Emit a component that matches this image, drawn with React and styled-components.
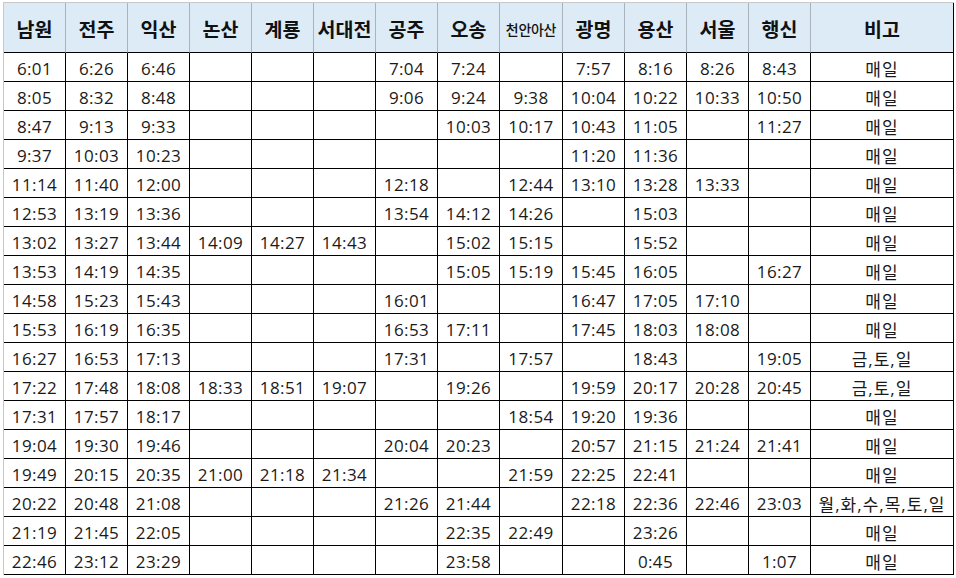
import styled, { createGlobalStyle } from 'styled-components';

// 기본 스타일
const GlobalStyle = createGlobalStyle`
  html, body {
    margin: 0;
    padding: 0;
    background: #ffffff;
  }
  body {
    font-family: "Noto Sans CJK KR", "Noto Sans", sans-serif;
    color: #111;
  }
`;

const COLUMNS = '62px 62px 62px 62px 62px 62px 62px 62px 63px 62px 62px 62px 62px 143px';

const Sheet = styled.div`
  padding: 2px 0 0 3px;
  width: 956px;
  height: 578px;
  box-sizing: border-box;
  overflow: hidden;
`;

const Grid = styled.div`
  display: grid;
  grid-template-columns: ${COLUMNS};
  grid-auto-rows: 29px;
  grid-template-rows: 50px;
  border-left: 1px solid #c8c8c8;
  border-top: 1px solid #c8c8c8;
  width: max-content;
`;

const HeadCell = styled.div`
  box-sizing: border-box;
  background: #ddebf7;
  border-right: 1px solid ${({ last }) => (last ? '#000' : '#a9b3bd')};
  border-bottom: 1px solid #000;
  display: flex;
  align-items: center;
  justify-content: center;
  font-size: ${({ small }) => (small ? '14px' : '19.5px')};
  font-weight: ${({ small }) => (small ? 500 : 700)};
  color: #111;
  padding-top: 2px;
  white-space: nowrap;
  letter-spacing: ${({ small }) => (small ? '-0.3px' : '0')};
`;

const Cell = styled.div`
  box-sizing: border-box;
  border-right: 1px solid #000;
  border-bottom: 1px solid #000;
  display: flex;
  align-items: center;
  justify-content: center;
  font-family: "Open Sans", "Noto Sans CJK KR", sans-serif;
  font-size: 17px;
  color: #1a1a1a;
  padding-top: 2px;
  white-space: nowrap;
  letter-spacing: ${({ note }) => (note ? '1px' : '0.4px')};
`;

const headers = ['남원', '전주', '익산', '논산', '계룡', '서대전', '공주', '오송', '천안아산', '광명', '용산', '서울', '행신', '비고'];

const rows = [
  ['6:01', '6:26', '6:46', '', '', '', '7:04', '7:24', '', '7:57', '8:16', '8:26', '8:43', '매일'],
  ['8:05', '8:32', '8:48', '', '', '', '9:06', '9:24', '9:38', '10:04', '10:22', '10:33', '10:50', '매일'],
  ['8:47', '9:13', '9:33', '', '', '', '', '10:03', '10:17', '10:43', '11:05', '', '11:27', '매일'],
  ['9:37', '10:03', '10:23', '', '', '', '', '', '', '11:20', '11:36', '', '', '매일'],
  ['11:14', '11:40', '12:00', '', '', '', '12:18', '', '12:44', '13:10', '13:28', '13:33', '', '매일'],
  ['12:53', '13:19', '13:36', '', '', '', '13:54', '14:12', '14:26', '', '15:03', '', '', '매일'],
  ['13:02', '13:27', '13:44', '14:09', '14:27', '14:43', '', '15:02', '15:15', '', '15:52', '', '', '매일'],
  ['13:53', '14:19', '14:35', '', '', '', '', '15:05', '15:19', '15:45', '16:05', '', '16:27', '매일'],
  ['14:58', '15:23', '15:43', '', '', '', '16:01', '', '', '16:47', '17:05', '17:10', '', '매일'],
  ['15:53', '16:19', '16:35', '', '', '', '16:53', '17:11', '', '17:45', '18:03', '18:08', '', '매일'],
  ['16:27', '16:53', '17:13', '', '', '', '17:31', '', '17:57', '', '18:43', '', '19:05', '금,토,일'],
  ['17:22', '17:48', '18:08', '18:33', '18:51', '19:07', '', '19:26', '', '19:59', '20:17', '20:28', '20:45', '금,토,일'],
  ['17:31', '17:57', '18:17', '', '', '', '', '', '18:54', '19:20', '19:36', '', '', '매일'],
  ['19:04', '19:30', '19:46', '', '', '', '20:04', '20:23', '', '20:57', '21:15', '21:24', '21:41', '매일'],
  ['19:49', '20:15', '20:35', '21:00', '21:18', '21:34', '', '', '21:59', '22:25', '22:41', '', '', '매일'],
  ['20:22', '20:48', '21:08', '', '', '', '21:26', '21:44', '', '22:18', '22:36', '22:46', '23:03', '월,화,수,목,토,일'],
  ['21:19', '21:45', '22:05', '', '', '', '', '22:35', '22:49', '', '23:26', '', '', '매일'],
  ['22:46', '23:12', '23:29', '', '', '', '', '23:58', '', '', '0:45', '', '1:07', '매일'],
];

function App() {
  return (
    <>
      <GlobalStyle />
      <Sheet>
        <Grid>
          {headers.map((h, i) => (
            <HeadCell key={h} small={h === '천안아산'} last={i === headers.length - 1}>
              {h}
            </HeadCell>
          ))}
          {rows.map((row, r) =>
            row.map((v, c) => (
              <Cell key={`${r}-${c}`} note={c === row.length - 1}>
                {v}
              </Cell>
            ))
          )}
        </Grid>
      </Sheet>
    </>
  );
}

export default App;
